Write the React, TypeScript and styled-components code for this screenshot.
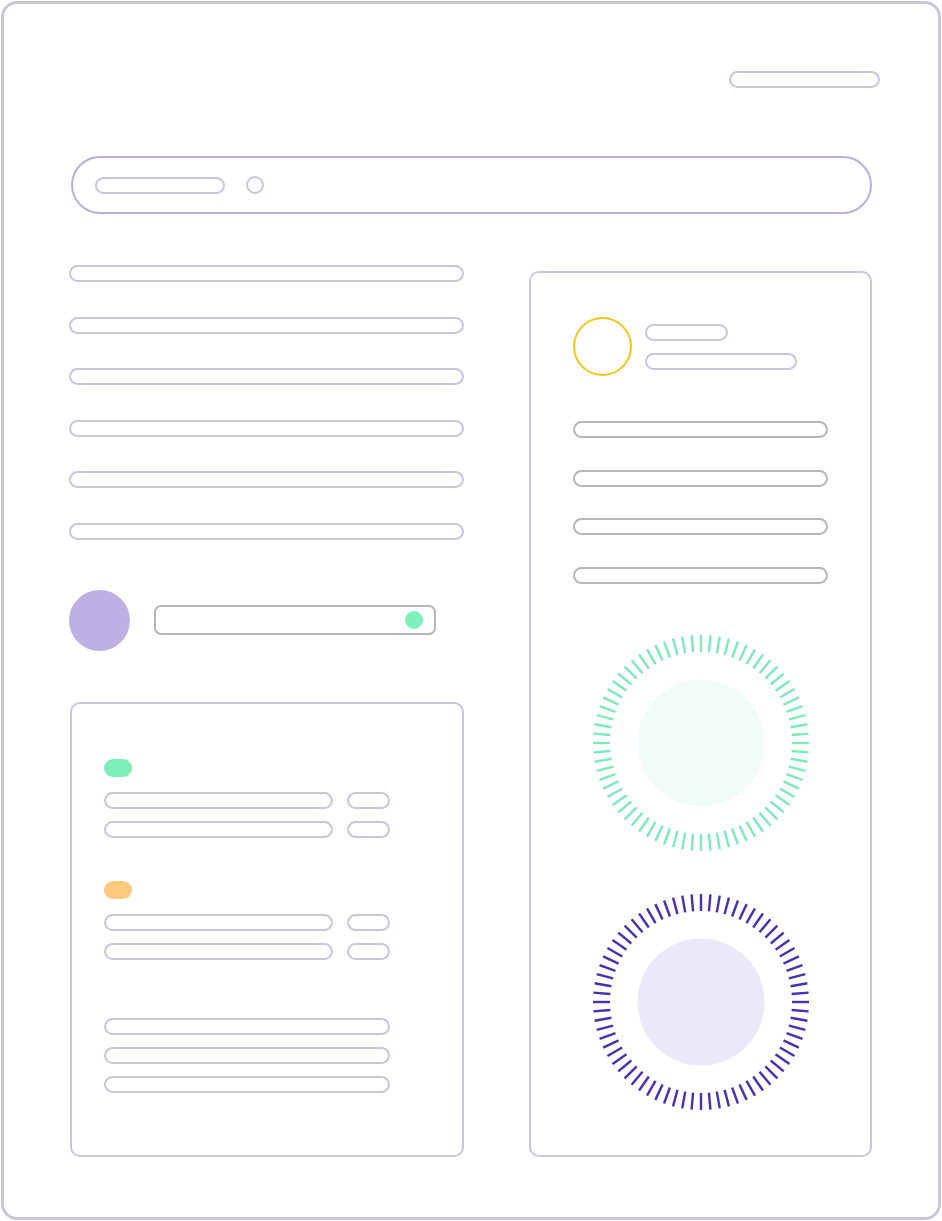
import React from 'react';
import styled, { createGlobalStyle } from 'styled-components';

const Global = createGlobalStyle`
  html, body {
    margin: 0;
    padding: 0;
    background: #ffffff;
    font-family: "Liberation Sans", Arial, sans-serif;
  }
  * { box-sizing: border-box; }
`;

const LINE = '#c9c5dc';
const GREY = '#b6b5be';

const Frame = styled.div`
  width: 940px;
  height: 1219px;
  margin: 1px;
  border: 3px solid ${LINE};
  border-radius: 16px;
  padding: 67px 58px 0 65px;
  display: flex;
  flex-direction: column;
`;

const TopBar = styled.div`
  display: flex;
  justify-content: flex-end;
`;

const Pill = styled.div<{ w: number; h?: number; tone?: string }>`
  width: ${p => p.w}px;
  height: ${p => p.h ?? 17}px;
  border: 2px solid ${p => p.tone ?? LINE};
  border-radius: 999px;
  flex-shrink: 0;
`;

const Search = styled.div`
  margin-top: 68px;
  margin-left: 2px;
  width: 801px;
  height: 58px;
  border: 2px solid #b8aee2;
  border-radius: 999px;
  display: flex;
  align-items: center;
  gap: 21px;
  padding-left: 22px;
`;

const Dot = styled.div`
  width: 18px;
  height: 18px;
  border: 2px solid ${LINE};
  border-radius: 50%;
`;

const Columns = styled.div`
  display: flex;
  gap: 65px;
  margin-top: 51px;
`;

const LeftCol = styled.div`
  width: 395px;
  display: flex;
  flex-direction: column;
`;

const Lines = styled.div`
  display: flex;
  flex-direction: column;
  gap: 34.5px;
`;

const UserRow = styled.div`
  display: flex;
  align-items: center;
  gap: 24px;
  margin-top: 50px;
`;

const Avatar = styled.div`
  width: 61px;
  height: 61px;
  border-radius: 50%;
  background: #bdb0e5;
`;

const Input = styled.div`
  width: 282px;
  height: 30px;
  border: 2px solid ${GREY};
  border-radius: 7px;
  display: flex;
  align-items: center;
  justify-content: flex-end;
  padding-right: 11px;
`;

const GreenDot = styled.div`
  width: 18px;
  height: 18px;
  border-radius: 50%;
  background: #7ef0bc;
`;

const Card = styled.div`
  margin-top: 51px;
  margin-left: 1px;
  width: 394px;
  height: 455px;
  border: 2px solid ${LINE};
  border-radius: 10px;
  padding: 55px 0 0 32px;
  display: flex;
  flex-direction: column;
`;

const Tag = styled.div<{ color: string }>`
  width: 28px;
  height: 18px;
  border-radius: 9px;
  background: ${p => p.color};
  margin-bottom: 15px;
`;

const Group = styled.div<{ top?: number }>`
  display: flex;
  flex-direction: column;
  gap: 12px;
  margin-top: ${p => p.top ?? 0}px;
`;

const Row = styled.div`
  display: flex;
  gap: 14px;
`;

const Side = styled.div`
  margin-top: 6px;
  width: 343px;
  height: 886px;
  border: 2px solid ${LINE};
  border-radius: 10px;
  padding: 44px 0 0 42px;
  display: flex;
  flex-direction: column;
`;

const Profile = styled.div`
  display: flex;
  align-items: center;
  gap: 13px;
`;

const Ring = styled.div`
  width: 59px;
  height: 59px;
  border: 2px solid #f6c515;
  border-radius: 50%;
`;

const Names = styled.div`
  display: flex;
  flex-direction: column;
  gap: 12px;
`;

const Fields = styled.div`
  display: flex;
  flex-direction: column;
  gap: 31.5px;
  margin-top: 45px;
`;

const Bursts = styled.div`
  display: flex;
  flex-direction: column;
  align-items: center;
  gap: 39px;
  margin-top: 49px;
  margin-left: -42px;
`;

const Sunburst = ({ tick, fill }: { tick: string; fill: string }) => {
  const n = 72;
  const c = 110;
  const ticks = Array.from({ length: n }, (_, i) => {
    const a = (i / n) * Math.PI * 2;
    const s = Math.sin(a);
    const co = Math.cos(a);
    return (
      <line
        key={i}
        x1={c + s * 91}
        y1={c - co * 91}
        x2={c + s * 108}
        y2={c - co * 108}
        stroke={tick}
        strokeWidth={2.4}
      />
    );
  });
  return (
    <svg width={220} height={220} viewBox="0 0 220 220">
      <circle cx={c} cy={c} r={63.5} fill={fill} />
      {ticks}
    </svg>
  );
};

const App = () => {
  return (
    <>
      <Global />
      <Frame>
        <TopBar>
          <Pill w={151} />
        </TopBar>
        <Search>
          <Pill w={130} />
          <Dot />
        </Search>
        <Columns>
          <LeftCol>
            <Lines>
              {[0, 1, 2, 3, 4, 5].map(i => (
                <Pill key={i} w={395} />
              ))}
            </Lines>
            <UserRow>
              <Avatar />
              <Input>
                <GreenDot />
              </Input>
            </UserRow>
            <Card>
              <Tag color="#7eeebb" />
              <Group>
                <Row><Pill w={229} /><Pill w={43} /></Row>
                <Row><Pill w={229} /><Pill w={43} /></Row>
              </Group>
              <Group top={43}>
                <Tag color="#fdc97b" />
              </Group>
              <Group>
                <Row><Pill w={229} /><Pill w={43} /></Row>
                <Row><Pill w={229} /><Pill w={43} /></Row>
              </Group>
              <Group top={58}>
                <Pill w={286} />
                <Pill w={286} />
                <Pill w={286} />
              </Group>
            </Card>
          </LeftCol>
          <Side>
            <Profile>
              <Ring />
              <Names>
                <Pill w={83} />
                <Pill w={152} />
              </Names>
            </Profile>
            <Fields>
              {[0, 1, 2, 3].map(i => (
                <Pill key={i} w={255} tone={GREY} />
              ))}
            </Fields>
            <Bursts>
              <Sunburst tick="#7ee9b9" fill="#f1fcf6" />
              <Sunburst tick="#4a2fb3" fill="#ece8f8" />
            </Bursts>
          </Side>
        </Columns>
      </Frame>
    </>
  );
};

export default App;
